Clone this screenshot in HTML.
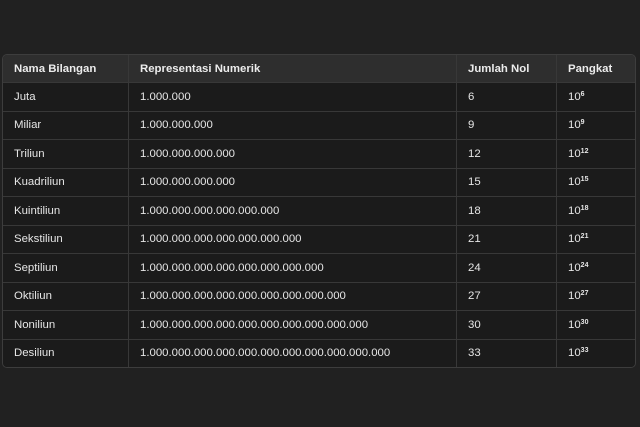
<!DOCTYPE html>
<html><head><style>
html,body{margin:0;padding:0;background:#212121;width:640px;height:427px;overflow:hidden}
table{position:absolute;left:2px;top:54px;width:634px;border-collapse:separate;border-spacing:0;border:1px solid #3d3d3d;border-radius:5px;overflow:hidden;font-family:"Liberation Sans",sans-serif;font-size:11.4px;color:#e6e6e6}
td,th{height:27.5px;padding:0 0 0 11px;text-align:left;border-bottom:1px solid #383838;border-right:1px solid #383838;white-space:nowrap}
th{background:#2e2e2e;font-weight:bold;color:#ececec;height:27px}
td{background:#1b1b1b}
tr:last-child td{border-bottom:none}
td:last-child,th:last-child{border-right:none}
sup{font-size:7px;vertical-align:4px;font-weight:bold}
</style></head><body>
<table>
<colgroup><col style="width:126px"><col style="width:328px"><col style="width:100px"><col></colgroup>
<tr><th>Nama Bilangan</th><th>Representasi Numerik</th><th>Jumlah Nol</th><th>Pangkat</th></tr>
<tr><td>Juta</td><td>1.000.000</td><td>6</td><td>10<sup>6</sup></td></tr>
<tr><td>Miliar</td><td>1.000.000.000</td><td>9</td><td>10<sup>9</sup></td></tr>
<tr><td>Triliun</td><td>1.000.000.000.000</td><td>12</td><td>10<sup>12</sup></td></tr>
<tr><td>Kuadriliun</td><td>1.000.000.000.000</td><td>15</td><td>10<sup>15</sup></td></tr>
<tr><td>Kuintiliun</td><td>1.000.000.000.000.000.000</td><td>18</td><td>10<sup>18</sup></td></tr>
<tr><td>Sekstiliun</td><td>1.000.000.000.000.000.000.000</td><td>21</td><td>10<sup>21</sup></td></tr>
<tr><td>Septiliun</td><td>1.000.000.000.000.000.000.000.000</td><td>24</td><td>10<sup>24</sup></td></tr>
<tr><td>Oktiliun</td><td>1.000.000.000.000.000.000.000.000.000</td><td>27</td><td>10<sup>27</sup></td></tr>
<tr><td>Noniliun</td><td>1.000.000.000.000.000.000.000.000.000.000</td><td>30</td><td>10<sup>30</sup></td></tr>
<tr><td>Desiliun</td><td>1.000.000.000.000.000.000.000.000.000.000.000</td><td>33</td><td>10<sup>33</sup></td></tr>
</table>
</body></html>
